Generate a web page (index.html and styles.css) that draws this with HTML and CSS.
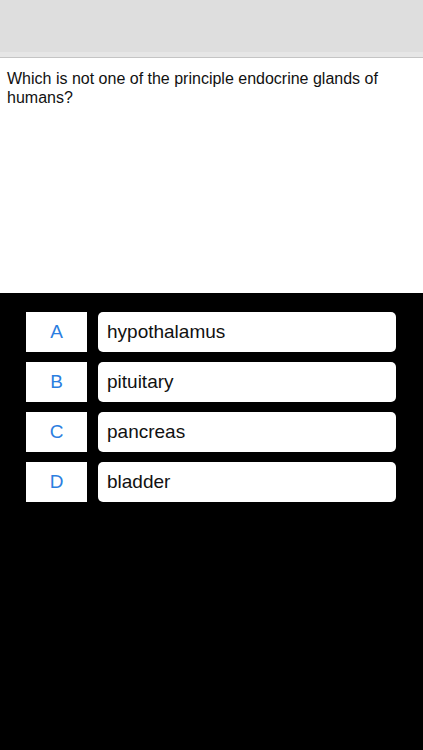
FILE: index.html
```html
<!DOCTYPE html>
<html lang="en">
<head>
    <meta charset="UTF-8">
    <meta name="viewport" content="width=device-width, initial-scale=1.0">
    <title>Quiz</title>
    <link rel="stylesheet" href="styles.css">
</head>
<body>
    <div class="header"></div>
    <div class="question">
        Which is not one of the principle endocrine glands of humans?
    </div>
    <div class="answers">
        <div class="answer-row">
            <div class="letter">A</div>
            <div class="choice">hypothalamus</div>
        </div>
        <div class="answer-row">
            <div class="letter">B</div>
            <div class="choice">pituitary</div>
        </div>
        <div class="answer-row">
            <div class="letter">C</div>
            <div class="choice">pancreas</div>
        </div>
        <div class="answer-row">
            <div class="letter">D</div>
            <div class="choice">bladder</div>
        </div>
    </div>
</body>
</html>
```

FILE: styles.css
```css
body {
    margin: 0;
    font-family: "Liberation Sans", Arial, sans-serif;
    background-color: #000;
    width: 423px;
    height: 750px;
    overflow: hidden;
}
.header {
    height: 52px;
    background-color: #dedede;
    border-bottom: 5px solid #e6e6e6;
    box-shadow: 0 1px 0 #c4c4c4;
    margin-bottom: 1px;
}
.question {
    height: 235px;
    background-color: #fff;
    box-sizing: border-box;
    padding: 11px 40px 0 7px;
    font-size: 16px;
    line-height: 19px;
    color: #111;
}
.answers {
    display: flex;
    flex-direction: column;
    gap: 10px;
    padding: 19px 27px 0 26px;
}
.answer-row {
    display: flex;
    gap: 11px;
    height: 40px;
}
.letter {
    width: 61px;
    background-color: #fff;
    color: #2b7ee0;
    font-size: 19px;
    display: flex;
    align-items: center;
    justify-content: center;
}
.choice {
    flex: 1;
    background-color: #fff;
    border-radius: 5px;
    color: #111;
    font-size: 19px;
    display: flex;
    align-items: center;
    padding-left: 9px;
}
```
